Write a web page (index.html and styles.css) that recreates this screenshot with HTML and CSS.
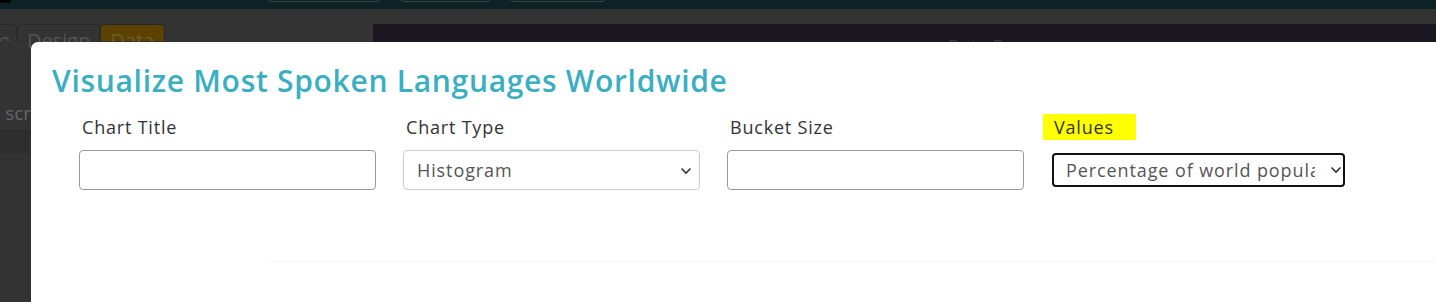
FILE: index.html
```html
<!DOCTYPE html>
<html lang="en">
<head>
    <meta charset="UTF-8">
    <meta name="viewport" content="width=device-width, initial-scale=1.0">
    <title>Visualize Most Spoken Languages Worldwide</title>
    <link rel="stylesheet" href="styles.css">
</head>
<body>
    <div class="app">
        <div class="topbar">
            <span class="top-btn top-btn-1"></span>
            <span class="top-btn top-btn-2"></span>
            <span class="top-btn top-btn-3"></span>
        </div>
        <div class="toolbar"></div>
        <div class="workspace">
            <div class="left-panel">
                <div class="tabs">
                    <span class="tab tab-code"><span>Code</span></span>
                    <span class="tab">Design</span>
                    <span class="tab tab-data">Data</span>
                </div>
                <div class="panel-gap"></div>
                <div class="panel-text">Show script</div>
                <div class="panel-dark"></div>
            </div>
            <div class="right-panel">
                <div class="browser-title">Data Browser</div>
            </div>
        </div>

        <div class="modal">
            <h2 class="modal-title">Visualize Most Spoken Languages Worldwide</h2>
            <div class="fields">
                <div class="field">
                    <label class="field-label">Chart Title</label>
                    <input class="field-input" type="text">
                </div>
                <div class="field">
                    <label class="field-label">Chart Type</label>
                    <div class="select-wrap">
                        <select class="field-input field-select">
                            <option>Histogram</option>
                        </select>
                        <svg class="chevron" width="12" height="8" viewBox="0 0 12 8"><path d="M1.5 1.5 L6 6 L10.5 1.5" fill="none" stroke="#333" stroke-width="1.6"/></svg>
                    </div>
                </div>
                <div class="field">
                    <label class="field-label">Bucket Size</label>
                    <input class="field-input" type="text">
                </div>
                <div class="field">
                    <label class="field-label"><span class="highlight">Values</span></label>
                    <div class="select-wrap select-focused">
                        <select class="field-input field-select field-focused">
                            <option>Percentage of world population</option>
                        </select>
                        <svg class="chevron" width="12" height="8" viewBox="0 0 12 8"><path d="M1.5 1.5 L6 6 L10.5 1.5" fill="none" stroke="#333" stroke-width="1.6"/></svg>
                    </div>
                </div>
            </div>
            <div class="chart-area"></div>
        </div>
    </div>
</body>
</html>
```

FILE: styles.css
```css
body {
    margin: 0;
    padding: 0;
    font-family: 'Open Sans', 'Liberation Sans', sans-serif;
    overflow: hidden;
}
.app {
    position: relative;
    width: 1436px;
    height: 302px;
    background-color: #333333;
    overflow: hidden;
}
.topbar {
    position: relative;
    height: 9px;
    background-color: #0c2227;
}
.topbar::before {
    content: "";
    position: absolute;
    left: 0;
    top: 0;
    width: 11px;
    height: 3px;
    background: #000;
    border-radius: 0 0 4px 0;
}
.top-btn {
    position: absolute;
    top: -6px;
    height: 6px;
    border: 1px solid #3a4446;
    border-radius: 4px;
}
.top-btn-1 { left: 267px; width: 112px; }
.top-btn-2 { left: 400px; width: 89px; }
.top-btn-3 { left: 510px; width: 94px; }
.toolbar {
    height: 15px;
    background-color: #333333;
}
.workspace {
    display: flex;
    height: 278px;
}
.left-panel {
    width: 373px;
    background-color: #333333;
}
.tabs {
    display: flex;
    height: 17px;
    font-size: 20px;
    color: #555;
}
.tab {
    padding: 4px 9px 0;
    border: 1px solid #2a2a2a;
    border-bottom: none;
    border-radius: 4px 4px 0 0;
    line-height: 24px;
    white-space: nowrap;
}
.tab-code {
    display: flex;
    justify-content: flex-end;
    width: 16px;
    padding: 4px 0 0;
    overflow: hidden;
    border-left: none;
    border-radius: 0 4px 0 0;
}
.tab-code span {
    flex-shrink: 0;
    margin-right: 6px;
}
.tab-data {
    background-color: #5c4200;
    color: #6e5c2c;
    padding: 4px 10px 0 9px;
}
.panel-gap {
    height: 57px;
}
.panel-text {
    height: 32px;
    color: #666;
    font-size: 19px;
    line-height: 30px;
    text-indent: -48px;
    white-space: nowrap;
    overflow: hidden;
    border-bottom: 1px solid #2a2a2a;
}
.panel-dark {
    height: 22px;
    background-color: #2e2e2e;
}
.right-panel {
    flex: 1;
    background-color: #1a1720;
}
.browser-title {
    padding: 10px 0 0 575px;
    color: #3a3840;
    font-size: 18px;
}
.modal {
    position: absolute;
    left: 31px;
    top: 42px;
    right: -20px;
    bottom: -20px;
    background: #fff;
    border-top-left-radius: 7px;
    padding: 20px 0 0 21px;
    box-sizing: border-box;
}
.modal-title {
    margin: 0;
    font-weight: 600;
    font-size: 30px;
    line-height: 38px;
    color: #3aafc1;
    letter-spacing: 0.7px;
}
.fields {
    display: grid;
    grid-template-columns: repeat(4, 297px);
    column-gap: 27px;
    margin: 14px 0 0 27px;
}
.field {
    display: flex;
    flex-direction: column;
}
.field-label {
    font-size: 18px;
    color: #333;
    line-height: 26px;
    letter-spacing: 0.8px;
    padding-left: 3px;
    margin-bottom: 10px;
}
.highlight {
    display: inline-block;
    background: #ffff00;
    padding: 0 22px 0 11px;
    margin-left: -11px;
}
.select-wrap {
    position: relative;
}
.field-input {
    box-sizing: border-box;
    width: 297px;
    height: 40px;
    border: 1px solid #999;
    border-radius: 4px;
    font-family: 'Open Sans', 'Liberation Sans', sans-serif;
    font-size: 18px;
    letter-spacing: 0.9px;
    color: #555;
    padding: 0 13px;
    background: #fff;
}
.field-select {
    -webkit-appearance: none;
    appearance: none;
    border-color: #ccc;
    padding-right: 30px;
}
.chevron {
    position: absolute;
    right: 8px;
    top: 17px;
}
.select-focused .chevron {
    right: 6px;
    top: 16px;
}
.field-focused {
    width: 293px;
    height: 34px;
    margin: 3px 0 0 1px;
    border: 2px solid #111;
    padding: 0 28px 0 12px;
    color: #555;
}
.chart-area {
    margin: 71px 0 0 213px;
    border-top: 1px solid #f8f8f8;
}
```
